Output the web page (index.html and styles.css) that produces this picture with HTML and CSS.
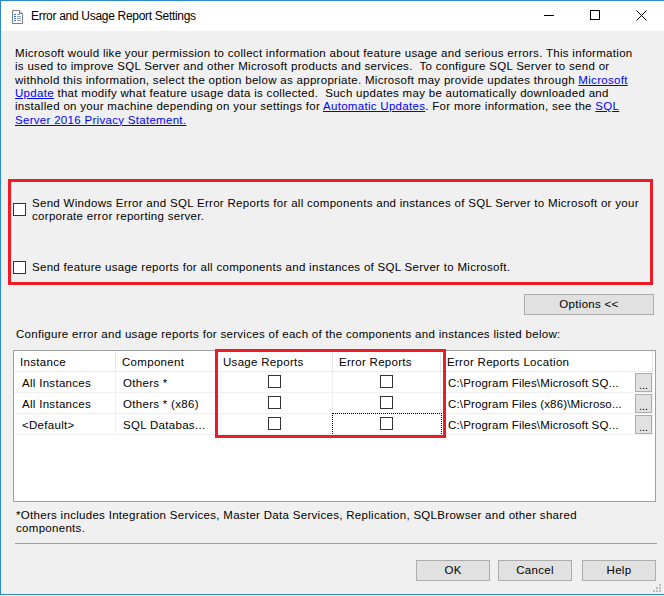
FILE: index.html
```html
<!DOCTYPE html>
<html>
<head>
<meta charset="utf-8">
<title>Error and Usage Report Settings</title>
<link rel="stylesheet" href="styles.css">
</head>
<body>
<div class="window">
  <div class="titlebar">
    <svg class="app-icon" width="11" height="14" viewBox="0 0 11 14">
      <path d="M0.5 0.5 H7.5 L10.5 3.5 V13.5 H0.5 Z" fill="#fff" stroke="#7d7d7d"/>
      <path d="M7.5 0.5 V3.5 H10.5" fill="#dcdcdc" stroke="#7d7d7d"/>
      <rect x="2" y="4" width="2" height="1" fill="#2f6fd0"/>
      <rect x="5" y="4" width="3" height="1" fill="#8aa6cf"/>
      <rect x="2" y="6" width="2" height="1" fill="#2f6fd0"/>
      <rect x="5" y="6" width="4" height="1" fill="#8aa6cf"/>
      <rect x="2" y="8" width="2" height="1" fill="#2f6fd0"/>
      <rect x="5" y="8" width="4" height="1" fill="#8aa6cf"/>
      <rect x="2" y="10" width="2" height="1" fill="#2f6fd0"/>
      <rect x="5" y="10" width="4" height="1" fill="#8aa6cf"/>
    </svg>
    <span class="title">Error and Usage Report Settings</span>
    <div class="caption-buttons">
      <div class="cap"><svg width="10" height="10" viewBox="0 0 10 10"><rect x="0" y="5" width="10" height="1" fill="#000"/></svg></div>
      <div class="cap"><svg width="10" height="10" viewBox="0 0 10 10"><rect x="0.5" y="0.5" width="9" height="9" fill="none" stroke="#000"/></svg></div>
      <div class="cap"><svg width="11" height="11" viewBox="0 0 11 11"><path d="M0.5 0.5 L10.5 10.5 M10.5 0.5 L0.5 10.5" stroke="#000" stroke-width="1"/></svg></div>
    </div>
  </div>

  <div class="client">
    <p class="intro">Microsoft would like your permission to collect information about feature usage and serious errors. This information<br>is used to improve SQL Server and other Microsoft products and services.&nbsp; To configure SQL Server to send or<br>withhold this information, select the option below as appropriate. Microsoft may provide updates through <a href="#">Microsoft</a><br><a href="#">Update</a> that modify what feature usage data is collected.&nbsp; Such updates may be automatically downloaded and<br>installed on your machine depending on your settings for <a href="#">Automatic Updates</a>. For more information, see the <a href="#">SQL</a><br><a href="#">Server 2016 Privacy Statement.</a></p>

    <div class="highlight-box">
      <div class="check-row two-line">
        <span class="checkbox"></span>
        <span class="check-label">Send Windows Error and SQL Error Reports for all components and instances of SQL Server to Microsoft or your<br>corporate error reporting server.</span>
      </div>
      <div class="check-row second">
        <span class="checkbox"></span>
        <span class="check-label">Send feature usage reports for all components and instances of SQL Server to Microsoft.</span>
      </div>
    </div>

    <div class="options-row">
      <div class="btn btn-options">Options &lt;&lt;</div>
    </div>

    <p class="configure">Configure error and usage reports for services of each of the components and instances listed below:</p>

    <div class="grid">
      <div class="grid-row header">
        <div class="cell">Instance</div>
        <div class="cell">Component</div>
        <div class="cell">Usage Reports</div>
        <div class="cell">Error Reports</div>
        <div class="cell">Error Reports Location</div>
      </div>
      <div class="grid-row">
        <div class="cell first">All Instances</div>
        <div class="cell">Others *</div>
        <div class="cell check"><span class="checkbox"></span></div>
        <div class="cell check"><span class="checkbox"></span></div>
        <div class="cell location"><span class="loc-text">C:\Program Files\Microsoft SQ...</span><span class="ellipsis">...</span></div>
      </div>
      <div class="grid-row">
        <div class="cell first">All Instances</div>
        <div class="cell">Others * (x86)</div>
        <div class="cell check"><span class="checkbox"></span></div>
        <div class="cell check"><span class="checkbox"></span></div>
        <div class="cell location"><span class="loc-text">C:\Program Files (x86)\Microso...</span><span class="ellipsis">...</span></div>
      </div>
      <div class="grid-row">
        <div class="cell first">&lt;Default&gt;</div>
        <div class="cell">SQL Databas...</div>
        <div class="cell check"><span class="checkbox"></span></div>
        <div class="cell check focused"><span class="checkbox"></span></div>
        <div class="cell location"><span class="loc-text">C:\Program Files\Microsoft SQ...</span><span class="ellipsis">...</span></div>
      </div>
      <div class="grid-highlight"></div>
    </div>

    <p class="footnote">*Others includes Integration Services, Master Data Services, Replication, SQLBrowser and other shared<br>components.</p>

    <div class="separator"></div>

    <div class="dialog-buttons">
      <div class="btn btn-dialog btn-ok">OK</div>
      <div class="btn btn-dialog btn-cancel">Cancel</div>
      <div class="btn btn-dialog">Help</div>
    </div>

    <svg class="grip" width="10" height="10" viewBox="0 0 10 10">
      <rect x="7" y="1" width="2" height="2" fill="#bcbcbc"/>
      <rect x="4" y="4" width="2" height="2" fill="#bcbcbc"/>
      <rect x="7" y="4" width="2" height="2" fill="#bcbcbc"/>
      <rect x="1" y="7" width="2" height="2" fill="#bcbcbc"/>
      <rect x="4" y="7" width="2" height="2" fill="#bcbcbc"/>
      <rect x="7" y="7" width="2" height="2" fill="#bcbcbc"/>
    </svg>
  </div>
</div>
</body>
</html>
```

FILE: styles.css
```css
* {
  box-sizing: border-box;
}

html, body {
  margin: 0;
  padding: 0;
}

body {
  width: 664px;
  height: 596px;
  overflow: hidden;
  background: #ffffff;
  font-family: "Liberation Sans", Arial, sans-serif;
  font-size: 11.5px;
  letter-spacing: 0.3px;
  color: #000;
}

.window {
  width: 664px;
  height: 595px;
  border-top: 1px solid #2b88d8;
  border-left: 1px solid #2b88d8;
  border-bottom: 1px solid #2b88d8;
  display: flex;
  flex-direction: column;
}

/* ---------- title bar ---------- */
.titlebar {
  height: 30px;
  flex: none;
  background: #ffffff;
  display: flex;
  align-items: center;
}

.app-icon {
  margin-left: 11px;
  margin-top: 1px;
  flex: none;
}

.title {
  margin-left: 8px;
  font-family: "Liberation Sans", Arial, sans-serif;
  font-size: 12px;
  letter-spacing: -0.3px;
  color: #000;
  white-space: nowrap;
}

.caption-buttons {
  margin-left: auto;
  display: flex;
  height: 30px;
}

.cap {
  width: 46px;
  height: 30px;
  display: flex;
  justify-content: center;
  align-items: flex-start;
  padding-top: 9px;
}

/* ---------- client area ---------- */
.client {
  flex: 1;
  position: relative;
  background: #f0f0f0;
  padding-top: 16px;
}

.intro {
  margin: 0 0 0 14px;
  line-height: 13.33px;
  white-space: nowrap;
}

a {
  color: #0000ff;
  text-decoration: underline;
}

.highlight-box {
  margin: 52px 0 0 7px;
  width: 645px;
  border: 3px solid #ed1c24;
  padding: 15px 0 8px 2px;
}

.check-row {
  display: flex;
  align-items: center;
}

.check-row.second {
  margin-top: 38px;
}

.checkbox {
  display: block;
  flex: none;
  width: 13px;
  height: 13px;
  border: 1px solid #333333;
  background: #ffffff;
}

.check-row .checkbox {
  margin-right: 6px;
}

.check-label {
  line-height: 13px;
  white-space: nowrap;
}

.options-row {
  display: flex;
  justify-content: flex-end;
  margin-top: 9px;
  padding-right: 10px;
}

.btn {
  height: 21px;
  background: #e1e1e1;
  border: 1px solid #adadad;
  display: flex;
  justify-content: center;
  align-items: center;
  padding-top: 1px;
  line-height: 13px;
  white-space: nowrap;
}

.btn-options {
  width: 130px;
}

.configure {
  margin: 13px 0 0 15px;
  line-height: 13px;
  white-space: nowrap;
}

/* ---------- grid ---------- */
.grid {
  position: relative;
  margin: 9px 0 0 12px;
  width: 643px;
  height: 152px;
  border: 1px solid #a0a0a0;
  background: #ffffff;
}

.grid-row {
  display: grid;
  grid-template-columns: 102px 101px 116px 108px 212px;
  height: 21px;
}

.cell {
  height: 21px;
  border-right: 1px solid #f0f0f0;
  border-bottom: 1px solid #f0f0f0;
  padding: 5px 0 0 7px;
  line-height: 13px;
  white-space: nowrap;
  overflow: hidden;
}

.cell.first {
  padding-left: 8px;
}

.header .cell {
  padding-left: 6px;
  border-right-color: #e5e5e5;
  border-bottom-color: #ebebeb;
}

.cell.check {
  padding: 0;
  display: flex;
  justify-content: center;
  align-items: center;
}

.cell.focused {
  outline: 1px dotted #000000;
  outline-offset: 0;
}

.cell.location {
  display: flex;
  align-items: flex-start;
  padding: 0 0 0 7px;
  letter-spacing: 0.16px;
}

.loc-text {
  padding-top: 5px;
}

.ellipsis {
  margin-left: auto;
  margin-top: 1px;
  width: 17px;
  height: 19px;
  background: #e1e1e1;
  border: 1px solid #adadad;
  padding-top: 6px;
  line-height: 11px;
  font-size: 11px;
  text-align: center;
  letter-spacing: 0;
}

.grid-highlight {
  position: absolute;
  left: 201px;
  top: -2px;
  width: 231px;
  height: 89px;
  border: 3px solid #ed1c24;
}

/* ---------- footer ---------- */
.footnote {
  margin: 7px 0 0 15px;
  line-height: 13.33px;
  white-space: nowrap;
}

.separator {
  margin: 7px 0 0 14px;
  width: 642px;
  height: 1px;
  background: #a0a0a0;
}

.dialog-buttons {
  display: flex;
  justify-content: flex-end;
  margin-top: 16px;
  padding-right: 8px;
}

.btn-dialog {
  width: 74px;
}

.btn-ok {
  margin-right: 8px;
}

.btn-cancel {
  margin-right: 10px;
}

.grip {
  position: absolute;
  right: 2px;
  bottom: 1px;
}
```
